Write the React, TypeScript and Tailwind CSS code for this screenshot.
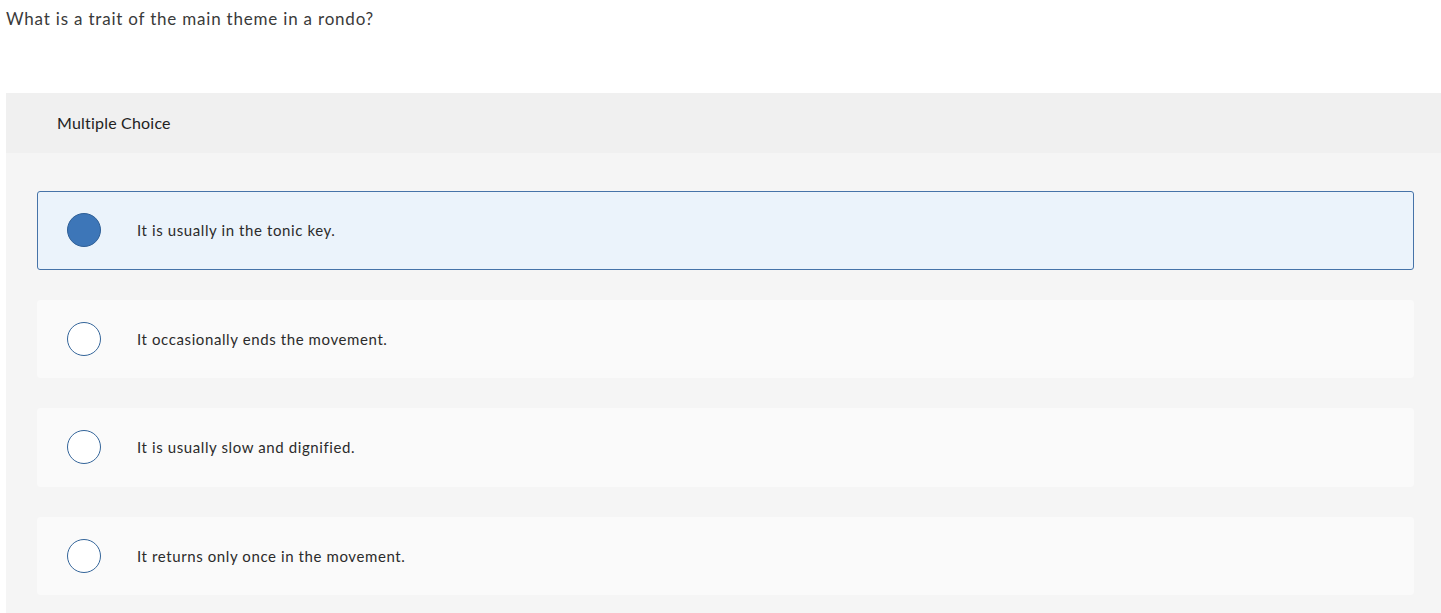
import React from "react";

const options = [
  { text: "It is usually in the tonic key.", selected: true },
  { text: "It occasionally ends the movement.", selected: false },
  { text: "It is usually slow and dignified.", selected: false },
  { text: "It returns only once in the movement.", selected: false },
];

export default function App() {
  return (
    <div
      className="min-h-[613px] bg-white text-[#333333]"
      style={{ fontFamily: "Lato, 'Open Sans', sans-serif" }}
    >
      <div className="pl-[6px] pt-[8px] h-[93px] text-[17px] leading-[22px] tracking-[0.8px] text-[#3a3a3a]">
        What is a trait of the main theme in a rondo?
      </div>
      <div className="ml-[6px] bg-[#f5f5f5] min-h-[520px]">
        <div className="h-[60px] bg-[#f0f0f0] flex items-center pl-[51px] text-[16px] tracking-[0.2px] text-[#222]">
          Multiple Choice
        </div>
        <div className="pt-[38px] pl-[31px] pr-[27px] flex flex-col gap-[30px]">
          {options.map((o, i) => (
            <div
              key={i}
              className={
                o.selected
                  ? "h-[78.5px] flex items-center rounded-[3px] border border-[#4673a8] bg-[#ebf3fb]"
                  : "h-[78.5px] flex items-center rounded-[4px] border border-transparent bg-[#fafafa]"
              }
            >
              <div className="w-[99px] flex items-center pl-[29px]">
                {o.selected ? (
                  <div className="w-[34px] h-[34px] rounded-full bg-[#3d76b8] border border-[#2f5f96]" />
                ) : (
                  <div className="w-[34px] h-[34px] rounded-full bg-white border-[1.5px] border-[#34659a]" />
                )}
              </div>
              <div className="text-[15px] tracking-[0.6px] text-[#2b2b2b]">{o.text}</div>
            </div>
          ))}
        </div>
      </div>
    </div>
  );
}
